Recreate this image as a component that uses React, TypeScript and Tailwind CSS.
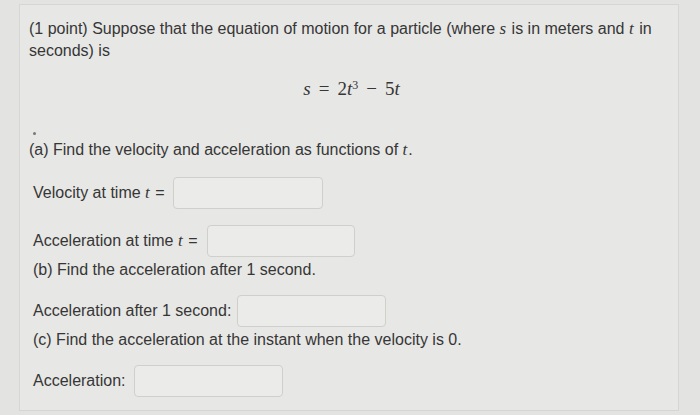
import React from "react";

const sans = { fontFamily: '"Liberation Sans", Arial, sans-serif' };

function Var({ children }: { children: React.ReactNode }) {
  return <span className="font-['Liberation_Serif',serif] italic text-[17px] pr-[1px]">{children}</span>;
}

function AnswerBox({ w = "w-[150px]" }: { w?: string }) {
  return <span className={`inline-block ${w} h-[32px] rounded-[4px] border border-[#cfcfcc] bg-[#ebebe9] align-middle`} />;
}

export default function App() {
  return (
    <div className="w-[700px] h-[415px] bg-[#e3e3e1] pt-[4px] pl-[19px]" style={sans}>
      <div className="w-[660px] h-[407px] border border-[#d6d6d3] bg-[#e7e7e5] pl-[9px] pt-[13px] text-[16px] leading-[22px] text-[#363636]">
        <p>
          (1 point) Suppose that the equation of motion for a particle (where <Var>s</Var> is in meters and <Var>t</Var> in
          <br />
          seconds) is
        </p>
        <p className="mt-[16px] text-center font-['Liberation_Serif',serif] text-[19px] pr-[4px]">
          <i>s</i>
          <span className="px-[8px]">=</span>2<i>t</i>
          <sup className="text-[12px]">3</sup>
          <span className="px-[8px]">−</span>5<i>t</i>
        </p>
        <div className="mt-[32px] ml-[4px] h-[3px] w-[3px] rounded-full bg-[#777]" />
        <p className="mt-[4px]">
          (a) Find the velocity and acceleration as functions of <Var>t</Var>.
        </p>
        <div className="mt-[16px] flex items-center gap-[8px] pl-[4px]">
          <span>
            Velocity at time <Var>t</Var> =
          </span>
          <AnswerBox />
        </div>
        <div className="mt-[16px] flex items-center gap-[10px] pl-[4px]">
          <span>
            Acceleration at time <Var>t</Var> =
          </span>
          <AnswerBox w="w-[148px]" />
        </div>
        <p className="mt-[2px] pl-[4px]">(b) Find the acceleration after 1 second.</p>
        <div className="mt-[14px] flex items-center gap-[6px] pl-[4px]">
          <span>Acceleration after 1 second:</span>
          <AnswerBox w="w-[149px]" />
        </div>
        <p className="mt-[2px] pl-[4px]">(c) Find the acceleration at the instant when the velocity is 0.</p>
        <div className="mt-[14px] flex items-center gap-[8px] pl-[4px]">
          <span>Acceleration:</span>
          <AnswerBox w="w-[149px]" />
        </div>
      </div>
    </div>
  );
}
